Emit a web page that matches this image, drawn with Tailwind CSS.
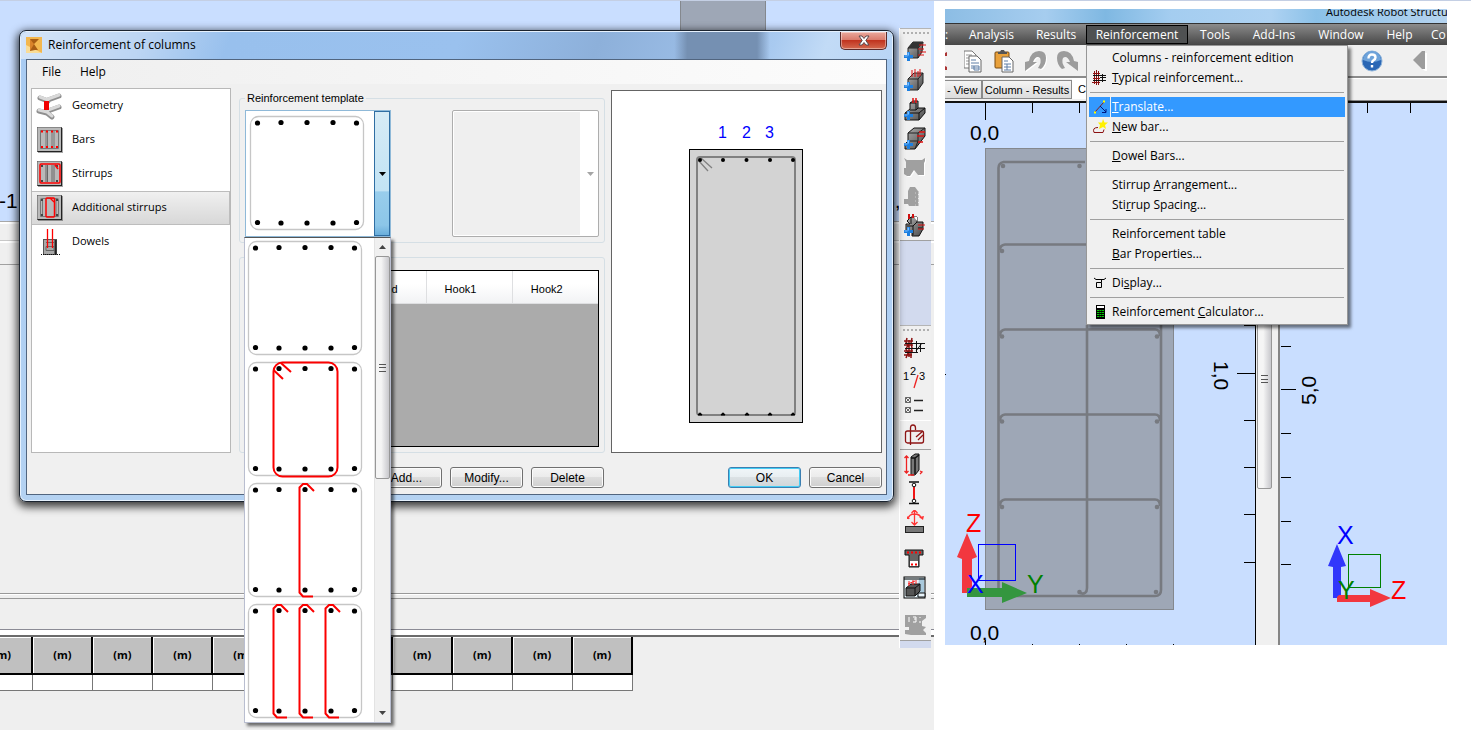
<!DOCTYPE html>
<html lang="en">
<head>
<meta charset="utf-8">
<title>Reinforcement of columns</title>
<script src="https://cdn.jsdelivr.net/npm/@tailwindcss/browser@4"></script>
</head>
<body class="bg-white text-black text-[12px] leading-4 font-['Open_Sans','Noto_Sans',sans-serif] min-h-screen border-t border-[#c4cfe4]">

<svg width="0" height="0" class="absolute" aria-hidden="true">
  <defs>
    <linearGradient id="steel" x1="0" y1="0" x2="1" y2="1"><stop offset="0" stop-color="#b0b0b0"/><stop offset="1" stop-color="#4a4a4a"/></linearGradient>
    <g id="dots">
      <rect x="0.5" y="0.5" width="113" height="113" rx="8" fill="#fff" stroke="#c6c6c6" stroke-width="1.3"/>
      <g fill="#000">
        <circle cx="7.5" cy="7" r="2.6"/><circle cx="31" cy="6.5" r="2.6"/><circle cx="57" cy="6.5" r="2.6"/><circle cx="83" cy="6.5" r="2.6"/><circle cx="106.500" cy="7" r="2.6"/>
        <circle cx="7.5" cy="106.500" r="2.6"/><circle cx="31" cy="107" r="2.6"/><circle cx="57" cy="107" r="2.6"/><circle cx="83" cy="107" r="2.6"/><circle cx="106.500" cy="106.500" r="2.6"/>
      </g>
    </g>
    <path id="hook" d="M66 8 L59 1 H55 L51.500 4.500 V109.500 L55 113.500 H65" fill="none" stroke="#fb0000" stroke-width="2"/>
    <g id="section">
      <rect x="3" y="3" width="25" height="25" fill="#000" opacity=".35"/>
      <rect x="2.500" y="2.500" width="24" height="24" fill="#b9b9b9" stroke="#222"/>
      <path d="M2.500 26.500V2.500H26.500" fill="none" stroke="#888"/>
    </g>
    <g id="plus"><path d="M3 0h3v3h3v3H6v3H3V6H0V3h3z" fill="#1c7fe0"/><path d="M3.500 .5h1.500v3h-1.500zM.5 3.500h3v1h-3z" fill="#7cc0ff"/></g>
  </defs>
</svg>

<main class="grid grid-cols-[934fr_11fr_502fr_24fr] items-start">

<!-- Left workspace -->
<section class="relative grid min-w-0" aria-label="Column reinforcement workspace">
  <div class="col-start-1 row-start-1 min-w-0 overflow-hidden bg-[#efefef]">
    <div class="h-[220px] bg-[#c9deff] overflow-hidden">
      <svg class="block w-full h-full font-['Liberation_Sans',sans-serif]" aria-hidden="true">
        <rect x="680.500" y="-2" width="85" height="60" fill="#9ea7b6" stroke="#84888e"/>
        <text x="-1" y="207" font-size="21">-1</text>
        <text x="883" y="207" font-size="21">5,</text>
      </svg>
    </div>
    <div class="h-[20px] border-t border-[#a8a8a8] shadow-[inset_0_2px_0_#fff] border-b border-b-[#c8c8c8]"></div>
    <div class="h-[24px] border-t-2 border-white border-b border-b-[#a0a0a0]"></div>
    <div class="h-[328px]"></div>
    <div class="h-[6px] border-y border-[#999]"><div class="h-px bg-white"></div></div>
    <div class="h-[30px]"></div>
    <div class="h-[8px] bg-white border-t border-t-[#8b8b95] border-b-2 border-b-[#6b6b6b]"></div>
    <table class="-ml-[28px] table-fixed w-[661px] border-collapse font-['Open_Sans',sans-serif] text-[11px] font-bold">
      <thead><tr class="h-[37px] bg-[#c0c0c0]">
        <th class="border-r-2 border-b-2 border-black shadow-[inset_1px_1px_0_#fff]">(m)</th><th class="border-r-2 border-b-2 border-black shadow-[inset_1px_1px_0_#fff]">(m)</th><th class="border-r-2 border-b-2 border-black shadow-[inset_1px_1px_0_#fff]">(m)</th><th class="border-r-2 border-b-2 border-black shadow-[inset_1px_1px_0_#fff]">(m)</th><th class="border-r-2 border-b-2 border-black shadow-[inset_1px_1px_0_#fff]">(m)</th><th class="border-r-2 border-b-2 border-black shadow-[inset_1px_1px_0_#fff]">(m)</th><th class="border-r-2 border-b-2 border-black shadow-[inset_1px_1px_0_#fff]">(m)</th><th class="border-r-2 border-b-2 border-black shadow-[inset_1px_1px_0_#fff]">(m)</th><th class="border-r-2 border-b-2 border-black shadow-[inset_1px_1px_0_#fff]">(m)</th><th class="border-r-2 border-b-2 border-black shadow-[inset_1px_1px_0_#fff]">(m)</th><th class="border-r-2 border-b-2 border-black shadow-[inset_1px_1px_0_#fff]">(m)</th>
      </tr></thead>
      <tbody><tr class="h-[16px] bg-white">
        <td class="border border-[#777]"></td><td class="border border-[#777]"></td><td class="border border-[#777]"></td><td class="border border-[#777]"></td><td class="border border-[#777]"></td><td class="border border-[#777]"></td><td class="border border-[#777]"></td><td class="border border-[#777]"></td><td class="border border-[#777]"></td><td class="border border-[#777]"></td><td class="border border-[#777]"></td>
      </tr></tbody>
    </table>
    <div class="h-[39px]"></div>
  </div>

  <!-- Docked tool strip -->
  <div class="col-start-1 row-start-1 justify-self-end self-start z-10 mt-[27px] mr-[3px] w-8 flex flex-col border-l border-white bg-[#f0f0f0]" role="toolbar" aria-label="Reinforcement tools">
    <div class="h-[9px] border-t border-[#b5b5b5] flex items-center justify-center"><div class="w-[26px] border-t-2 border-dotted border-[#b0b0b0]"></div></div>
    <button class="h-[29px] pr-[2px] grid place-items-center" aria-label="Beam"><svg width="24" height="24"><path d="M5 8 L10 2H20L19 12L15 18H5z" fill="url(#steel)" stroke="#222"/><path d="M5 8H15V18M15 8L20 2" fill="none" stroke="#222"/><path d="M5 8L10 2H20L15 8z" fill="#333"/><path d="M16 5h7M15 9h6M17 12h6M15 15h6" stroke="#e01010"/><use href="#plus" x="1" y="12"/></svg></button>
    <button class="h-[29px] pr-[2px] grid place-items-center" aria-label="Column"><svg width="24" height="24"><path d="M5 10L11 4H20V14L15 21H5z" fill="url(#steel)" stroke="#222"/><path d="M5 10H15V21M15 10L20 4" fill="none" stroke="#222"/><path d="M9 1v7M12 0v8M15 2v6M17 0v7" stroke="#e01010"/><use href="#plus" x="1" y="13"/></svg></button>
    <button class="h-[29px] pr-[2px] grid place-items-center" aria-label="Foundation"><svg width="24" height="24"><path d="M2 15L7 11V5L10 3H15V10H22V15L16 22H2z" fill="url(#steel)" stroke="#111"/><path d="M2 15H16V22M16 15L22 10M7 5H13V12L15 10M7 12H13" fill="none" stroke="#111"/><path d="M10 0v5M13 0v5" stroke="#e01010" stroke-width="1.500"/><use href="#plus" x="1" y="13"/></svg></button>
    <button class="h-[29px] pr-[2px] grid place-items-center" aria-label="Wall"><svg width="24" height="24"><path d="M5 6L11 1H22V9L12 22H2V17L5 14z" fill="url(#steel)" stroke="#111"/><path d="M5 6H15L22 1M15 6V14L12 22M5 14H15" fill="none" stroke="#222"/><path d="M16 5h6M14 9h7M15 15h5" stroke="#e01010" stroke-width="1.500"/><use href="#plus" x="1" y="13"/></svg></button>
    <button class="h-[29px] pr-[2px] grid place-items-center" aria-label="Deep beam" disabled><svg width="24" height="24"><path d="M1 2l3 2h15l3-2v3l-1 2v12h-6l-4-5-4 6H4l-3-2v-6h2V6z" fill="#fff" transform="translate(1 1)"/><path d="M1 2l3 2h15l3-2v3l-1 2v12h-6l-4-5-4 6H4l-3-2v-6h2V6z" fill="#a0a0a0"/></svg></button>
    <button class="h-[29px] pr-[2px] grid place-items-center" aria-label="Stair" disabled><svg width="24" height="24"><path d="M5 6l2-4h5l3 4v15H6l-1-2H1v-5h4z" fill="#a0a0a0"/><path d="M12 8h3M12 12h3M12 16h3M12 20h3" stroke="#fff"/><path d="M14 6v15" stroke="#a0a0a0" stroke-dasharray="3 1" stroke-width="3"/></svg></button>
    <button class="h-[29px] pr-[2px] grid place-items-center" aria-label="Node"><svg width="24" height="24"><path d="M4 7L8 3H14V8H20V15L16 22H9V17H3V10H7z" fill="url(#steel)" stroke="#111"/><path d="M8 3v7M14 8l-4 4H4M10 12v9M15 14h4" stroke="#111" fill="none"/><path d="M14 3h-3l3 4z" fill="#fff"/><path d="M6 0v5M10 0v4" stroke="#d01010" stroke-width="2"/><path d="M15 11h7M15 15h6" stroke="#e01010"/><use href="#plus" x="1" y="13"/></svg></button>
    <div class="h-[85px] bg-[#d2daee] border-t border-[#a0a0a0]"></div>
    <div class="h-[9px] border-t border-[#b5b5b5] flex items-center justify-center"><div class="w-[26px] border-t-2 border-dotted border-[#b0b0b0]"></div></div>
    <button class="h-[28px] pr-[2px] grid place-items-center" aria-label="Typical reinforcement"><svg width="24" height="24"><g fill="none" stroke="#8b1010" stroke-width="1.500"><path d="M4 2l-1 4 2 3-2 4 2 4-2 5M9 2l-1 5 1 5-1 5v5M6 4v17M1 5h9M1 9h9M1 15h9M1 19h8"/></g><path d="M2 7.500h20M2 12.500h20M2 16.500h13M13.500 5v12M17.500 7v9M13 15l6-8" stroke="#111" fill="none"/></svg></button>
    <button class="h-[29px] pr-[2px] grid place-items-center" aria-label="Numbering"><svg width="24" height="24" class="font-['Liberation_Sans',sans-serif]"><text x="0" y="15" font-size="11">1</text><text x="7" y="10" font-size="11">2</text><text x="16" y="15" font-size="11">3</text><path d="M15 10l-4 13" stroke="#e22" stroke-width="1.300"/></svg></button>
    <button class="h-[29px] pr-[2px] grid place-items-center" aria-label="Legend"><svg width="24" height="24" fill="none"><path d="M2.500 3.500h5v5h-5zM2.500 3.500l5 5M7.500 3.500l-5 5M2.500 13.500h5v5h-5zM2.500 13.500l5 5M7.500 13.500l-5 5" stroke="#666"/><path d="M11 6.500h9M11 16.500h9" stroke="#222" stroke-width="1.300"/></svg></button>
    <button class="h-[30px] pr-[2px] grid place-items-center border-y border-t-white border-b-[#a0a0a0]" aria-label="Stirrup shape"><svg width="24" height="24" fill="none" stroke="#8e1515" stroke-width="1.300"><rect x="2.500" y="8" width="18" height="12" rx="2"/><path d="M7.500 22V5q0-3 2.500-3t2.500 3v2M13 14l7-6M15 17l5-5"/></svg></button>
    <button class="h-[29px] pr-[2px] grid place-items-center" aria-label="Column height"><svg width="24" height="24"><path d="M8 4l4-3h4v16l-4 5H8z" fill="#777" stroke="#111"/><path d="M12 5v16M8 5h4l4-3" stroke="#111" fill="none" stroke-width="1.500"/><path d="M3.500 3v17M1.500 5l2-2 2 2M1.500 18l2 2 2-2M5 22h6M17 18l2 1-2 2" fill="none" stroke="#e22" stroke-width="1.300"/></svg></button>
    <button class="h-[28px] pr-[2px] grid place-items-center" aria-label="Member length"><svg width="24" height="24"><path d="M11 4v16" stroke="#f01515" stroke-width="2"/><path d="M6 1h10M6 22.500h10" stroke="#111" stroke-width="1.300"/><circle cx="11" cy="4" r="1.800" fill="#fff" stroke="#111"/><circle cx="11" cy="20" r="1.800" fill="#fff" stroke="#111"/></svg></button>
    <button class="h-[29px] pr-[2px] grid place-items-center" aria-label="Support"><svg width="24" height="24"><rect x="2.500" y="16.500" width="18" height="6" fill="#777" stroke="#222"/><path d="M11.500 0v15M8.500 3l3-3 3 3M8.500 12l3 3 3-3M5 9q1-5 6.500-5t6.500 4" fill="none" stroke="#f33" stroke-width="1.300"/><path d="M16 7l5-1-1 4zM7 9H4V6z" fill="#f33"/></svg></button>
    <button class="h-[29px] mt-[8px] pr-[2px] grid place-items-center" aria-label="T section"><svg width="24" height="24"><path d="M2 3h18v5h-4v12H6V8H2z" fill="#666" stroke="#111"/><path d="M7 14h8v5H7z" fill="#fff"/><path d="M4 5.500h2M8 5.500h2M12 5.500h2M16 5.500h2M8 17.500h2M12 17.500h2" stroke="#f00" stroke-width="2"/></svg></button>
    <button class="h-[29px] pr-[2px] grid place-items-center" aria-label="3D view"><svg width="24" height="24"><rect x="1" y="1" width="21" height="21" fill="#eaf6fb" stroke="#000"/><path d="M16 2h5v19h-7z" fill="#a9c9dc"/><path d="M1 3h21" stroke="#000"/><path d="M3 12l5-4h9v7l-5 5H3z" fill="#555" stroke="#111"/><path d="M3 12h9v8M12 12l5-4" stroke="#111" fill="none"/><path d="M6 10V5M10 9V4M13 8V4M5 8l7-3" stroke="#f22"/><path d="M15 17h7v4h-7z" fill="#e8f4fb" stroke="#111"/></svg></button>
    <button class="h-[30px] mt-[8px] pr-[2px] grid place-items-center" aria-label="Section view" disabled><svg width="24" height="24"><path d="M2 2h21v3l-4 3v5l4 1-3 3 3 3v2H8l-6-1v-4h4v-3H2z" fill="#a0a0a0"/><path d="M6 4v5M10 4h3v2h-2M13 6v3h-3M17 4v1M17 8v2" stroke="#fff" fill="none"/></svg></button>
    <div class="h-[8px] border-t border-[#a0a0a0] bg-[#d2daee]"></div>
  </div>

  <!-- Dialog window -->
  <div role="dialog" aria-labelledby="dlg-title" class="absolute z-20 left-[19px] right-[40px] top-[29px] rounded-[7px] border border-[#1b2430] bg-linear-to-b from-[#a8cbf2] to-[#b4d2f2] shadow-[0_3px_9px_2px_rgba(0,0,0,0.75),inset_0_0_0_1px_#e6f1fd] px-[6px] pb-[6px] flex flex-col">
    <header class="flex items-start h-[27px] -mx-[5px] px-[5px] mt-px rounded-t-[6px] bg-[linear-gradient(90deg,transparent_75%,#7590b2_76.500%,#7590b2_84.500%,transparent_86%),linear-gradient(110deg,#d5e5f8_0%,#bcd5f3_14%,#98c0ed_24%,#9ac1ee_50%,#8db0da_66%,#9bbde6_78%,#a9caf0_86%,#c2dbf6_92%,#b9d5f5_100%)]">
      <svg width="16" height="16" class="mt-[5px] shrink-0" aria-hidden="true"><rect width="16" height="16" fill="#f3b74e"/><path d="M0 8L16 16H0z" fill="#f9dc96"/><path d="M4 2h9l-5 5 4 6H9L4 14z" fill="#a85d14"/><path d="M4 2l4 5-4 7z" fill="#d9832a"/></svg>
      <h1 id="dlg-title" class="ml-[6px] mt-[5px] grow whitespace-nowrap">Reinforcement of columns</h1>
      <button aria-label="Close" class="w-[47px] h-[18px] rounded-b-[5px] border border-t-0 border-[#5b2a2a] bg-[linear-gradient(#eaa99d,#d9796a_48%,#c1341f_50%,#d4694f)] shadow-[inset_0_0_0_1px_rgba(255,255,255,0.4)] grid place-items-center">
        <svg width="12" height="11" aria-hidden="true"><path d="M1 1h3l2 2.500L8 1h3L7.800 5.500 11 10H8L6 7.500 4 10H1l3.200-4.500z" fill="#fff" stroke="#5a4a4e" stroke-width="1"/></svg>
      </button>
    </header>
    <div class="border border-[#51657f] bg-[#f0f0f0] flex flex-col pb-[6px]">
      <nav class="flex h-[24px] items-center bg-linear-to-r from-[#efefef] to-[#fcfcfc] pl-[15px] gap-[19px]">
        <button>File</button><button>Help</button>
      </nav>
      <div class="flex pt-[4px] px-[4px]">
        <ul class="w-[200px] h-[365px] shrink-0 bg-white border border-[#b8b8b8] text-[11px]">
          <li><button class="flex w-full h-[34px] items-center pl-[3px] gap-[7px]"><svg width="30" height="30" aria-hidden="true"><g stroke="#8f8f8f" stroke-width="5" stroke-linecap="round"><path d="M5 7l8 3M13 9l11-4M4 20l8 2M13 20l11-4M12 22l5 4"/></g><g stroke="#d9d9d9" stroke-width="3" stroke-linecap="round"><path d="M5 6l8 3M13 8l11-4M4 19l8 2M13 19l11-4M12 21l5 4"/></g><path d="M9 10h5v9H9z" fill="#f00000"/></svg><span class="pb-[3px]">Geometry</span></button></li>
          <li><button class="flex w-full h-[34px] items-center pl-[3px] gap-[7px]"><svg width="30" height="30" aria-hidden="true"><use href="#section"/><path d="M5.500 5.500h18v18h-18zM11 5.500v18M12.500 5.500v18M17 5.500v18M19 5.500v18" fill="none" stroke="#777"/><path d="M6 6.500h2M11 6.500h2M16 6.500h2M21 6.500h2M6 22h2M11 22h2M16 22h2M21 22h2" stroke="#f00" stroke-width="2"/></svg><span class="pb-[3px]">Bars</span></button></li>
          <li><button class="flex w-full h-[34px] items-center pl-[3px] gap-[7px]"><svg width="30" height="30" aria-hidden="true"><use href="#section"/><path d="M11 6v17M12.500 6v17M17 6v17M19 6v17" stroke="#666"/><path d="M6 7h2M21 7h2M6 22h2M21 22h2" stroke="#444" stroke-width="2"/><rect x="5" y="5" width="20" height="19" rx="1" fill="none" stroke="#f00" stroke-width="1.500"/><path d="M20 6l3 4" stroke="#f00" stroke-width="1.500"/></svg><span class="pb-[3px]">Stirrups</span></button></li>
          <li><button aria-current="true" class="flex w-full h-[34px] items-center pl-[3px] gap-[7px] border-y border-r border-[#bdbdbd] bg-linear-to-b from-[#f0f0f0] to-[#d8d8d8]"><svg width="30" height="30" aria-hidden="true"><use href="#section"/><path d="M5.500 6.500q0-1 1-1h16q1 0 1 1v17h-18zM7.500 6v17M21 6v17" fill="none" stroke="#777"/><path d="M6 7h2M21 7h2M6 22h2M21 22h2" stroke="#444" stroke-width="2"/><rect x="11" y="5" width="8.500" height="19" rx="1" fill="none" stroke="#f00" stroke-width="1.500"/><path d="M15 5l4 4" stroke="#f00" stroke-width="1.300"/></svg><span class="pb-[3px]">Additional stirrups</span></button></li>
          <li><button class="flex w-full h-[34px] items-center pl-[3px] gap-[7px]"><svg width="30" height="30" aria-hidden="true"><rect x="8.500" y="12.500" width="13" height="15" fill="#a8a8a8" stroke="#555"/><path d="M20.500 13v14" stroke="#222" stroke-width="2"/><path d="M11 15.500h8M11 19.500h8v4h-8z" fill="none" stroke="#666"/><path d="M6 27.500h19" stroke="#111" stroke-dasharray="1 1"/><path d="M12.500 2v19M17.500 2v19" stroke="#f00" stroke-width="1.300"/></svg><span class="pb-[3px]">Dowels</span></button></li>
        </ul>
        <div class="ml-[8px] pt-[2px] grow min-w-0 flex flex-col gap-[7px] font-['Liberation_Sans',sans-serif] text-[11px]">
          <fieldset class="min-w-0 border border-[#d5dfe5] rounded-[3px] px-[5px] pb-[4px] h-[153px]">
            <legend class="px-[2px] leading-[16px]">Reinforcement template</legend>
            <div class="flex justify-between pt-[4px] h-[131px]">
              <button aria-haspopup="listbox" aria-expanded="true" aria-label="Reinforcement template" class="flex w-[146px] h-[127px] border border-[#8fb9d8] bg-white">
                <span class="grow h-full pl-[4px] pt-[5px]"><svg width="114" height="114" class="block overflow-visible"><use href="#dots"/></svg></span>
                <span class="w-[16px] h-full border border-[#2f6ea3] grid place-items-center bg-[linear-gradient(#d6ebf6,#c2e3f4_64%,#98cdec_65%,#8cc6e8_92%,#6aaedb)]"><svg width="7" height="4"><path d="M0 0h7L3.500 4z"/></svg></span>
              </button>
              <div class="relative w-[147px] h-[127px]">
                <select disabled aria-label="Variant" class="appearance-none w-full h-full rounded-[2px] border border-[#adadad] bg-[linear-gradient(to_right,#efefef_0_127px,#fff_127px)] shadow-[inset_0_0_0_1px_#fff]"></select>
                <svg width="7" height="4" class="absolute right-[5px] top-[62px]" aria-hidden="true"><path d="M0 0h7L3.500 4z" fill="#a5a5a5"/></svg>
              </div>
            </div>
          </fieldset>
          <div class="mt-[7px] h-[196px] border border-[#d5dfe5] rounded-[3px] pt-[12px] pl-[7px] pr-[5px]">
            <div class="h-[177px] border border-black bg-[#ababab] overflow-hidden flex justify-end">
              <table class="w-full h-[33px] table-fixed border-collapse bg-linear-to-b from-white from-40% to-[#f1f2f4]">
                <thead><tr><th></th>
                  <th class="w-[86px] font-normal border-r border-[#dedfe1] text-right pt-[3px] pr-[28px] border-b">End</th>
                  <th class="w-[86px] font-normal border-r border-[#dedfe1] pt-[3px] pr-[17px] border-b">Hook1</th>
                  <th class="w-[86px] font-normal pt-[3px] pr-[17px] border-b border-[#dedfe1]">Hook2</th></tr></thead>
              </table>
            </div>
          </div>
        </div>
        <div class="ml-[6px] w-[271px] h-[363px] mt-[2px] shrink-0 bg-white border border-[#646464]">
          <svg width="269" height="361" class="block font-['Liberation_Sans',sans-serif]" role="img" aria-label="Column section">
            <g fill="#0000ff" font-size="16"><text x="106" y="47">1</text><text x="130" y="47">2</text><text x="153" y="47">3</text></g>
            <rect x="77.500" y="58.500" width="113" height="273" fill="#d3d3d3" stroke="#000"/>
            <rect x="85" y="66" width="98" height="258" rx="3" fill="none" stroke="#808080" stroke-width="2"/>
            <path d="M86 69l10 11M89 67l11 10" stroke="#808080" stroke-width="1.300"/>
            <g fill="#000"><circle cx="88" cy="69" r="2"/><circle cx="111" cy="69" r="2"/><circle cx="134.500" cy="69" r="2"/><circle cx="158" cy="69" r="2"/><circle cx="181" cy="69" r="2"/>
            <path d="M86 324q2-4 4 0zM109 324q2-4 4 0zM133 324q2-4 4 0zM156 324q2-4 4 0zM179 324q2-4 4 0z" stroke="#000"/></g>
          </svg>
        </div>
      </div>
      <div class="flex h-[21px] mt-[14px] pr-[4px] gap-[8px] text-[12px] font-['Liberation_Sans',sans-serif] justify-end">
        <button class="w-[73px] rounded-[3px] border border-[#707070] bg-[linear-gradient(#f4f4f4,#ebebeb_48%,#dddddd_50%,#cfcfcf)] shadow-[inset_0_0_0_1px_#fbfbfb] pl-[2px]">Add...</button>
        <button class="w-[73px] rounded-[3px] border border-[#707070] bg-[linear-gradient(#f4f4f4,#ebebeb_48%,#dddddd_50%,#cfcfcf)] shadow-[inset_0_0_0_1px_#fbfbfb]">Modify...</button>
        <button class="w-[73px] rounded-[3px] border border-[#707070] bg-[linear-gradient(#f4f4f4,#ebebeb_48%,#dddddd_50%,#cfcfcf)] shadow-[inset_0_0_0_1px_#fbfbfb]">Delete</button>
        <button class="w-[73px] ml-[116px] rounded-[3px] border border-[#3c7fb1] bg-[linear-gradient(#f0f6f9,#e8eef1_48%,#dbe1e4_50%,#d0d6d9)] shadow-[inset_0_0_0_1px_#44cdf5]">OK</button>
        <button class="w-[73px] rounded-[3px] border border-[#707070] bg-[linear-gradient(#f4f4f4,#ebebeb_48%,#dddddd_50%,#cfcfcf)] shadow-[inset_0_0_0_1px_#fbfbfb]">Cancel</button>
      </div>
    </div>
  </div>

  <!-- Open template list -->
  <div class="absolute z-30 left-[244px] top-[236px] w-[147px] flex bg-white border border-[#b9bed0] border-t-[#555] shadow-[3px_3px_3px_rgba(0,0,0,0.55)]">
    <div role="listbox" aria-label="Templates" class="grow flex flex-col gap-[7px] pl-[3px] pt-[3px] pb-[4px]">
      <button role="option" aria-label="No inner stirrup"><svg width="114" height="114" class="block overflow-visible"><use href="#dots"/></svg></button>
      <button role="option" aria-label="Closed inner stirrup"><svg width="114" height="114" class="block overflow-visible"><use href="#dots"/><rect x="25.500" y="0.500" width="64" height="114" rx="9" fill="none" stroke="#fb0000" stroke-width="2"/><path d="M33 1l10 9M25.500 8l9.500 9" stroke="#fb0000" stroke-width="2"/></svg></button>
      <button role="option" aria-label="Single tie"><svg width="114" height="114" class="block overflow-visible"><use href="#dots"/><use href="#hook"/></svg></button>
      <button role="option" aria-label="Three ties"><svg width="114" height="114" class="block overflow-visible"><use href="#dots"/><use href="#hook" x="-26"/><use href="#hook"/><use href="#hook" x="26"/></svg></button>
    </div>
    <div class="w-[16px] shrink-0 bg-[#f0f0f0] border-l border-[#e3e3e3] flex flex-col items-center">
      <button aria-label="Scroll up" class="h-[18px] w-full grid place-items-center shrink-0"><svg width="7" height="4"><path d="M0 4h7L3.500 0z" fill="#444"/></svg></button>
      <div class="h-[223px] w-full rounded-[2px] border border-[#979797] bg-linear-to-r from-[#f5f5f5] from-40% to-[#c8c8cc] grid place-items-center"><div class="w-[7px] h-[8px] border-y border-[#555] grid place-items-center"><div class="w-full h-px bg-[#555]"></div></div></div>
      <button aria-label="Scroll down" class="mt-auto h-[18px] w-full grid place-items-center shrink-0"><svg width="7" height="4"><path d="M0 0h7L3.500 4z" fill="#444"/></svg></button>
    </div>
  </div>
</section>

<!-- Right application window -->
<section class="col-start-3 relative min-w-0 mt-[8px] overflow-hidden bg-[#f0f0f0]" aria-label="Robot window">
  <div class="h-[15px] overflow-hidden bg-[linear-gradient(to_right,#8cbde4,#a6cdef_20%,#7fb8e2_32%,#a4cdf0_45%,#aed2f2_65%,#8bc1e8_74%,#b5d3ef)] border-b border-[#333] flex justify-end">
    <div class="w-[121px] whitespace-nowrap text-[11px] -mt-[5px]">Autodesk Robot Structu</div>
  </div>
  <nav class="flex h-[21px] items-center whitespace-nowrap bg-linear-to-b from-[#8c8c8c] to-[#474747] text-white overflow-hidden">
    <button class="w-[12px] shrink-0 text-left">:</button>
    <button class="w-[69px] shrink-0 text-center">Analysis</button>
    <button class="w-[60px] shrink-0 text-center">Results</button>
    <button class="w-[102px] shrink-0 h-[19px] border border-black bg-[#4f5152] text-center" aria-expanded="true">Reinforcement</button>
    <button class="w-[54px] shrink-0 text-center">Tools</button>
    <button class="w-[64px] shrink-0 text-center">Add-Ins</button>
    <button class="w-[70px] shrink-0 text-center">Window</button>
    <button class="w-[47px] shrink-0 text-center">Help</button>
    <button class="pl-[8px] shrink-0 text-left">Co</button>
  </nav>
  <div class="h-[33px] flex items-center border-b-2 border-[#8b8b8b] bg-[#f0f0f0]">
    <button aria-label="Cut" class="w-[19px]"><svg width="4" height="24"><path d="M0 4l2-1v4H0zM0 17l2 1v3H0z" fill="#a33"/></svg></button>
    <button aria-label="Copy" class="w-[30px]"><svg width="20" height="24"><path d="M0 2h8l4 4v13H0z" fill="#fff" stroke="#777"/><path d="M2 6h6M2 9h7M2 12h6M2 15h6" stroke="#999"/><path d="M5 7h8l4 4v12H5z" fill="#fff" stroke="#666"/><path d="M7 11h5M7 14h8M7 17h3v4h5v-4h-5M7 19h8" fill="none" stroke="#5e7ea6"/></svg></button>
    <button aria-label="Paste" class="w-[30px]"><svg width="22" height="24"><rect x="1" y="3" width="14" height="16" rx="1" fill="#e9a13b" stroke="#7a4b10"/><path d="M4 5V3h2l1-2h3l1 2h2v2z" fill="#555"/><path d="M8 8h7l4 4v11H8z" fill="#fff" stroke="#666"/><path d="M10 12h4M10 15h7M10 18h7M10 21h7M13 15v6" stroke="#5e7ea6"/></svg></button>
    <button aria-label="Undo" disabled class="w-[32px]"><svg width="24" height="24"><path d="M1 22V13l4-1Q7 2 15 2q7 0 7 7 0 7-5 11l-3-1q4-6 2-10-4-3-7 4h4z" fill="#fff" transform="translate(1 1)"/><path d="M1 22V13l4-1Q7 2 15 2q7 0 7 7 0 7-5 11l-3-1q4-6 2-10-4-3-7 4h4z" fill="#9c9c9c"/></svg></button>
    <button aria-label="Redo" disabled class="w-[24px]"><svg width="24" height="24"><path d="M22 22V13l-4-1Q16 2 8 2 1 2 1 9q0 7 5 11l3-1Q5 13 7 9q4-3 7 4h-4z" fill="#9c9c9c"/></svg></button>
    <button aria-label="Help" class="ml-auto w-[52px]"><svg width="22" height="22"><circle cx="11" cy="11" r="10" fill="#2a67b5" stroke="#8fb4da"/><path d="M2 10a9 9 0 0 1 18 0q-9 4-18 0z" fill="#6ea3da"/><path d="M7.500 8.500q0-4 3.500-4t3.500 3q0 1.500-2 2.800-1.500 1-1.500 2.700M11 15v2.500" fill="none" stroke="#fff" stroke-width="2.400"/></svg></button>
    <button aria-label="Back" disabled class="w-[34px]"><svg width="14" height="20"><path d="M13 1v18L11 19 1 10l10-9z" fill="#fff" transform="translate(1 1)"/><path d="M12 0v18h-3L0 9l9-9z" fill="#9c9c9c"/></svg></button>
  </div>
  <div role="tablist" class="flex items-end h-[23px] pt-[2px] font-['Liberation_Sans',sans-serif] text-[11px] whitespace-nowrap bg-[#f0f0f0] border-t border-white">
    <button role="tab" class="w-[37px] h-[19px] mb-[2px] pl-[2px] text-left border-r border-y border-[#8a8a8a] bg-linear-to-b from-[#f4f4f4] to-[#dcdcdc]">- View</button>
    <button role="tab" class="w-[90px] h-[19px] mb-[2px] border border-[#8a8a8a] bg-linear-to-b from-[#f4f4f4] to-[#dcdcdc]">Column - Results</button>
    <button role="tab" aria-selected="true" class="w-[120px] h-[20px] mb-[2px] text-left pl-[6px] bg-white">C</button>
    <div class="grow h-[20px] border-b border-[#8a8a8a]"></div>
  </div>
  <div class="flex h-[544px] border-t-2 border-[#111] bg-[#c9deff]">
    <svg class="block grow min-w-0 h-full overflow-hidden font-['Liberation_Sans',sans-serif]" viewBox="945 103 310 542" preserveAspectRatio="xMinYMin slice" role="img" aria-label="Column elevation">
      <rect x="985.500" y="148.500" width="188" height="461" fill="#9ea7b6" stroke="#84888e"/>
      <path d="M985.500 103v17M1032.500 103v10M1079.500 103v10M1237 373.500h18M1244 325.500h11M1244 420.500h11M1244 467.500h11M1244 514.500h11M1244 562.500h11M985.500 640v5M1032.500 644v1M1079.500 644v1M1126.500 644v1M1173.500 644v1M945 374.500h1" stroke="#000"/>
      <g fill="none" stroke="#777a80" stroke-width="2.600">
        <path d="M998.500 590V168q0-5 5-6H1085M998.500 590q0 6 5 6H1155q6 0 6-6V150M1000 250q0-5 5-5.500H1155M1087 325V588q0 7-7 5M1000 336q0-6 5-6.500H1155q5 0 5 6.500M1000 421q0-6 5-6.500H1155q5 0 5 6.500M1000 506q0-6 5-6.500H1155q5 0 5 6.500"/>
      </g>
      <g fill="#777a80"><circle cx="1003" cy="166" r="2.300"/><circle cx="1079.500" cy="166" r="2.300"/><circle cx="1002" cy="251" r="2.300"/><circle cx="1002" cy="336.500" r="2.300"/><circle cx="1157" cy="336.500" r="2.300"/><circle cx="1002" cy="421.500" r="2.300"/><circle cx="1157" cy="421.500" r="2.300"/><circle cx="1002" cy="507" r="2.300"/><circle cx="1157" cy="507" r="2.300"/><circle cx="1079.500" cy="592" r="2.300"/><circle cx="1156" cy="592" r="2.300"/></g>
      <g font-size="21"><text x="970" y="140">0,0</text><text x="970" y="640">0,0</text><text transform="translate(1214 361) rotate(90)">1,0</text></g>
      <path d="M967 533l10 24-5 2v34h-10v-34l-5-2z" fill="#f2373f"/>
      <path d="M967 588h35v-6l25 11-25 10v-6h-35z" fill="#34963f"/>
      <rect x="978.500" y="544.500" width="37" height="36" fill="none" stroke="#00f"/>
      <g font-size="25"><text x="966" y="532" fill="#f00">Z</text><text x="967" y="593" fill="#00f">X</text><text x="1027" y="593" fill="#008000">Y</text></g>
    </svg>
    <div class="w-[25px] shrink-0 border-l border-black border-r-2 border-r-[#858585] bg-[#f0f0f0] pl-px">
      <div class="w-[15px] h-[386px] border border-[#979797] rounded-[2px] bg-linear-to-r from-[#f5f5f5] from-40% to-[#c8c8cc] pt-[271px] pl-[3px]"><div class="w-[7px] h-[8px] border-x-0 border-y border-[#555] grid place-items-center"><div class="w-full h-px bg-[#555]"></div></div></div>
    </div>
    <svg class="block w-[167px] shrink-0 h-full overflow-hidden font-['Liberation_Sans',sans-serif]" viewBox="1280 103 167 542" preserveAspectRatio="xMinYMin slice" role="img" aria-label="Column side view">
      <path d="M1367.500 103v10M1410.500 103v10M1281 346.500h10M1281 389.500h15M1281 433.500h10M1281 477.500h10M1281 521.500h10M1281 564.500h10" stroke="#000"/>
      <text font-size="21" transform="translate(1316 405) rotate(-90)">5,0</text>
      <rect x="1348.500" y="554.500" width="32" height="33" fill="none" stroke="#008000"/>
      <path d="M1337 544l9 22-5 1v31h-8v-31l-5-1z" fill="#3137fb"/>
      <path d="M1339 595h31v-6l21 9-21 9v-5h-33v-5z" fill="#f2373f"/>
      <g font-size="25"><text x="1337" y="544" fill="#00f">X</text><text x="1338" y="599" fill="#008000">Y</text><text x="1391" y="599" fill="#f00">Z</text></g>
    </svg>
  </div>

  <!-- Open Reinforcement menu -->
  <div role="menu" class="absolute z-10 left-[141px] top-[36px] w-[262px] border border-[#979797] bg-[#f0f0f0] shadow-[3px_3px_3px_rgba(0,0,0,0.5)] px-[2px] py-[2px] whitespace-nowrap">
    <button role="menuitem" class="flex h-[20px] w-full items-center pl-[23px]">Columns - reinforcement edition</button>
    <button role="menuitem" class="flex h-[20px] w-full items-center pl-[3px] gap-[4px]"><svg width="16" height="16"><path d="M2.500 1v13M4.500 0v15M6.500 1v14M1 3.500h7M1 8.500h7M0 12.500h8" stroke="#8b1010"/><path d="M1 5.500h13M1 10.500h13M8 7.500h6M10.500 4v8" stroke="#111"/></svg><span><u>T</u>ypical reinforcement...</span></button>
    <hr class="my-[4px] mx-px border-[#a0a0a0]">
    <button role="menuitem" class="flex h-[20px] w-full items-center gap-px text-white"><span class="w-[21px] h-full bg-[#3399ff] grid place-items-center"><svg width="16" height="16"><path d="M3 13L12 3" stroke="#802020"/><path d="M8 7l6 6M10 13.500h4V10" stroke="#001a80" fill="none"/><path d="M2 13.500h2M11 2.500h2" stroke="#ff0" stroke-width="2"/></svg></span><span class="grow h-full bg-[#3399ff] flex items-center pl-px"><span><u>T</u>ranslate...</span></span></button>
    <button role="menuitem" class="flex h-[20px] w-full items-center pl-[3px] gap-[4px]"><svg width="16" height="16"><path d="M11 0l1.500 3.500H16l-3 2.500 1 4-3-2-4 2 1-4-2-2.500h4z" fill="#fff000"/><path d="M2 13.500q-2-5 4-5M2 13.500h9l1-3" fill="none" stroke="#8b1010"/></svg><span><u>N</u>ew bar...</span></button>
    <hr class="my-[4px] mx-px border-[#a0a0a0]">
    <button role="menuitem" class="flex h-[20px] w-full items-center pl-[23px]"><span><u>D</u>owel Bars...</span></button>
    <hr class="my-[4px] mx-px border-[#a0a0a0]">
    <button role="menuitem" class="flex h-[20px] w-full items-center pl-[23px]"><span>Stirrup <u>A</u>rrangement...</span></button>
    <button role="menuitem" class="flex h-[20px] w-full items-center pl-[23px]"><span>Sti<u>r</u>rup Spacing...</span></button>
    <hr class="my-[4px] mx-px border-[#a0a0a0]">
    <button role="menuitem" class="flex h-[20px] w-full items-center pl-[23px]">Reinforcement table</button>
    <button role="menuitem" class="flex h-[20px] w-full items-center pl-[23px]"><span><u>B</u>ar Properties...</span></button>
    <hr class="my-[4px] mx-px border-[#a0a0a0]">
    <button role="menuitem" class="flex h-[20px] w-full items-center pl-[3px] gap-[4px]"><svg width="16" height="16" fill="none" stroke="#000"><path d="M2 3l2 1.500h8L14 3M4.500 7.500h5v5h-5zM9.500 7.500V5"/></svg><span>Di<u>s</u>play...</span></button>
    <hr class="my-[4px] mx-px border-[#a0a0a0]">
    <button role="menuitem" class="flex h-[20px] w-full items-center pl-[3px] gap-[4px]"><svg width="16" height="16"><rect x="4" y="1" width="9" height="14"/><path d="M5 3h7" stroke="#fff" stroke-width="2"/><path d="M5 6.500h7M5 8.500h7M5 10.500h7M5 12.500h7" stroke="#0c0" stroke-dasharray="2 .5"/></svg><span>Reinforcement <u>C</u>alculator...</span></button>
  </div>
</section>
</main>
</body>
</html>
